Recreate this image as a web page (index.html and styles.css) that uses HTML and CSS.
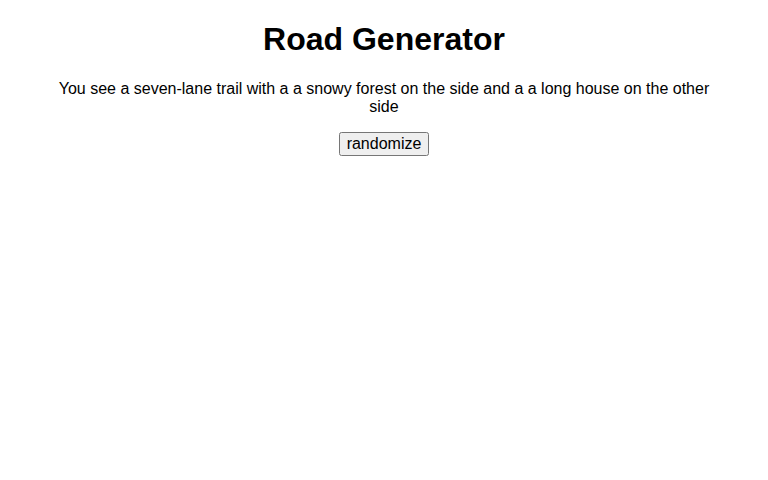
FILE: index.html
```html
<!DOCTYPE html>
<html>
<head>
    <title>Road Generator</title>
    <link rel="stylesheet" href="styles.css">
</head>
<body>

<h1>Road Generator</h1>
<p class="road-text" id="road">You see a seven-lane trail with a a snowy forest on the side and a a long house on the other side</p>
<button class="randomize-btn" onclick="location.reload()">randomize</button>

</body>
</html>
```

FILE: styles.css
```css
body {
    font-family: 'Liberation Sans', Arial, sans-serif;
    text-align: center;
    color: #000;
    background-color: #fff;
}

h1 {
    font-size: 2em;
    margin: 13px 0 22px 0;
}

.road-text {
    margin: 16px 0;
    padding: 0 40px;
}

.randomize-btn {
    font-family: 'Liberation Sans', Arial, sans-serif;
    font-size: 16px;
}
```
